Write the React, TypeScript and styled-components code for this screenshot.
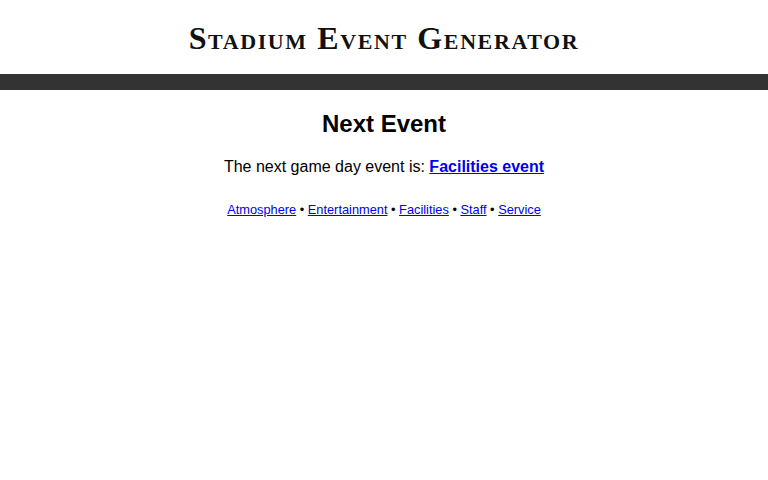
import styled, { createGlobalStyle } from 'styled-components';

const GlobalStyle = createGlobalStyle`
  html, body {
    margin: 0;
    padding: 0;
    background: #fff;
  }
  body {
    font-family: "Liberation Sans", Arial, sans-serif;
    color: #000;
  }
`;

const Header = styled.header`
  height: 74px;
  padding-top: 3px;
  box-sizing: border-box;
  display: flex;
  align-items: center;
  justify-content: center;
`;

const Title = styled.h1`
  margin: 0;
  font-family: "Liberation Serif", "Times New Roman", serif;
  font-variant: small-caps;
  font-weight: bold;
  font-size: 32px;
  letter-spacing: 1.6px;
  color: #111;
`;

const Bar = styled.div`
  height: 16px;
  background: #333;
`;

const Main = styled.main`
  display: flex;
  flex-direction: column;
  align-items: center;
  padding-top: 20px;
`;

const Heading = styled.h2`
  margin: 0;
  font-size: 24px;
  font-weight: bold;
  line-height: 28px;
`;

const Lead = styled.p`
  margin: 19px 0 0;
  font-size: 16px;
  line-height: 20px;
`;

const EventLink = styled.a`
  color: #0000ee;
  font-weight: bold;
`;

const Nav = styled.nav`
  margin-top: 25px;
  font-size: 12.8px;
  line-height: 16px;
`;

const NavLink = styled.a`
  color: #0000ee;
`;

const categories = ['Atmosphere', 'Entertainment', 'Facilities', 'Staff', 'Service'];

const App = () => (
  <>
    <GlobalStyle />
    <Header>
      <Title>Stadium Event Generator</Title>
    </Header>
    <Bar />
    <Main>
      <Heading>Next Event</Heading>
      <Lead>
        The next game day event is: <EventLink href="#">Facilities event</EventLink>
      </Lead>
      <Nav>
        {categories.map((c, i) => (
          <span key={c}>
            {i > 0 && ' • '}
            <NavLink href="#">{c}</NavLink>
          </span>
        ))}
      </Nav>
    </Main>
  </>
);

export default App;
